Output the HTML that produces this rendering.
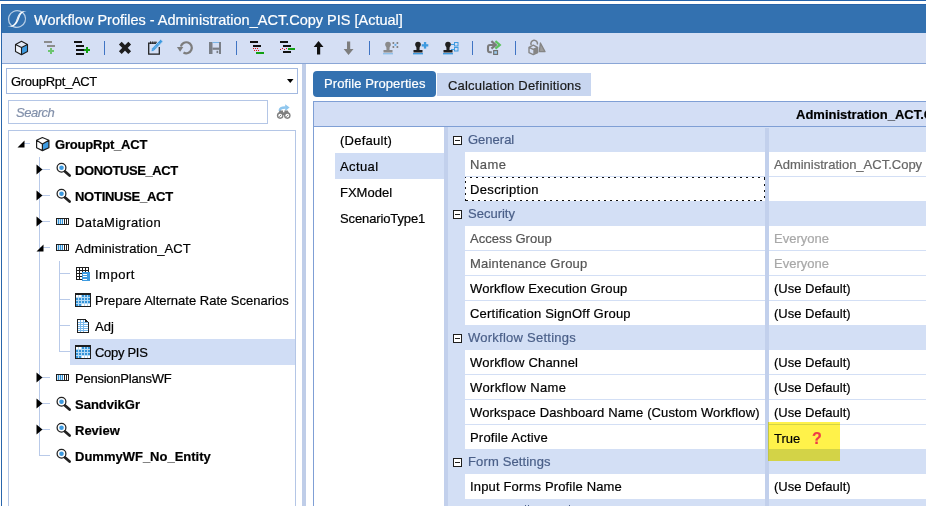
<!DOCTYPE html>
<html><head><meta charset="utf-8">
<style>
*{margin:0;padding:0;box-sizing:border-box}
html,body{width:926px;height:506px;overflow:hidden;background:#fff;font-family:"Liberation Sans",sans-serif;font-size:13px;color:#000}
.a{position:absolute}
.t{position:absolute;line-height:15px;white-space:nowrap;-webkit-text-stroke:0.2px currentColor}
.b{font-weight:bold}
svg{position:absolute;overflow:visible}
</style></head><body>
<!-- top line -->
<div class="a" style="left:0;top:0;width:926px;height:1px;background:#2563aa"></div>
<!-- frame left line -->
<div class="a" style="left:1px;top:4px;width:1px;height:502px;background:#2a66ab"></div>
<!-- title bar -->
<div class="a" style="left:1px;top:4px;width:925px;height:29px;background:#3371b0;border-top:1px solid #2864aa;border-left:1px solid #2864aa"></div>
<div class="t" style="left:34px;top:12px;font-size:14.5px;line-height:17px;color:#fff">Workflow Profiles - Administration_ACT.Copy PIS [Actual]</div>
<!-- toolbar -->
<div class="a" style="left:2px;top:33px;width:924px;height:31px;background:#d5dff4;border-bottom:1px solid #8aa6d6"></div>

<!-- left panel -->
<div class="a" style="left:6px;top:68px;width:292px;height:26px;border:1px solid #a3b9e0"></div>
<div class="t" style="left:11px;top:74px;letter-spacing:-0.3px">GroupRpt_ACT</div>
<div class="a" style="left:8px;top:100px;width:260px;height:24px;border:1px solid #b4c6e6"></div>
<div class="t" style="left:16px;top:105px;font-style:italic;color:#8290aa;letter-spacing:-0.5px">Search</div>
<div class="a" style="left:8px;top:130px;width:288px;height:380px;border:1px solid #b4c6e6"></div>
<!-- splitter -->
<div class="a" style="left:302px;top:64px;width:4px;height:442px;background:#bfcde8"></div>

<!-- tabs -->
<div class="a" style="left:313px;top:71px;width:123px;height:26px;background:#3371b0;border-radius:4px"></div>
<div class="t" style="left:324px;top:76px;color:#fff;letter-spacing:0.1px">Profile Properties</div>
<div class="a" style="left:437px;top:73px;width:154px;height:23px;background:#c8d6f0"></div>
<div class="t" style="left:448px;top:78px;color:#1a1a1a;letter-spacing:0.2px">Calculation Definitions</div>

<!-- content panel -->
<div class="a" style="left:313px;top:101px;width:620px;height:420px;border:1px solid #7f9fd5"></div>
<div class="a" style="left:314px;top:102px;width:612px;height:25px;background:#d3def5;border-bottom:1px solid #7f9fd5"></div>
<div class="t b" style="left:796px;top:107px">Administration_ACT.Copy PIS</div>
<svg style="left:6px;top:8px" width="24" height="22" viewBox="0 0 24 22"><ellipse cx="11" cy="11" rx="8.6" ry="8.3" transform="rotate(-25 11 11)" fill="none" stroke="#e3ecf7" stroke-width="1.3" opacity="0.75"/><path d="M1.5 18.6 C6 18.6 8.5 16.5 10 13 C11.5 9 12.5 5 16 3.6 C17.5 3.1 19 3.1 20.8 3.3 C17 3.6 15 5.5 13.5 9.5 C12 13.5 10.5 17 7 18.4 C5 19 3 18.9 1.5 18.6 Z" fill="#fff"/><path d="M10.6 13.5 C11.6 11 12.2 8.5 13.6 6.3" fill="none" stroke="#9fbfe0" stroke-width="0.5" opacity="0.8"/></svg>
<svg style="left:286px;top:78px" width="8" height="6" viewBox="0 0 8 6"><path d="M1 1 H7.5 L4.25 5 Z" fill="#000"/></svg>
<svg style="left:275px;top:103px" width="17" height="18" viewBox="0 0 17 18"><path d="M4.6 7.8 C4.8 5.2 7 4.4 10.6 4.5" fill="none" stroke="#8ec6ee" stroke-width="2.3"/><path d="M10.2 1.3 L14.6 4.6 L10.2 7.9 Z" fill="#8ec6ee"/><path d="M2.6 12 L4.6 7.6 H8 V9.2 H9.4 V7.6 H12.8 L14.8 12 Z" fill="#7f7f7f"/><circle cx="5.2" cy="12.6" r="3.3" fill="#7f7f7f"/><circle cx="12.3" cy="12.6" r="3.3" fill="#7f7f7f"/><circle cx="5.2" cy="12.6" r="1.9" fill="#fff"/><circle cx="12.3" cy="12.6" r="1.9" fill="#fff"/><path d="M4.4 13.6 L5.8 12.2 M11.5 13.6 L12.9 12.2" stroke="#555" stroke-width="0.9"/></svg>
<div class="a" style="left:70px;top:339px;width:225px;height:26px;background:#d0ddf5"></div>
<div class="a" style="left:39px;top:157px;width:1px;height:299px;background:#b9cae9"></div>
<div class="a" style="left:59px;top:261px;width:1px;height:91px;background:#b9cae9"></div>
<div class="a" style="left:24px;top:143px;width:6px;height:1px;background:#b9cae9"></div>
<svg style="left:17px;top:140px" width="8" height="8" viewBox="0 0 8 8"><path d="M7.5 0.5 L7.5 7.5 L0.5 7.5 Z" fill="#000"/></svg>
<svg style="left:36px;top:137px" width="14" height="15" viewBox="0 0 14 15"><path d="M6.4 6.9 L12.9 3.2 L12.9 10.7 L6.4 14.1 Z" fill="#3d9ae0"/><path d="M6.4 0.5 L12.9 3.2 L12.9 10.7 L6.4 13.6 L0.6 10.7 L0.6 3.2 Z M0.6 3.2 L6.4 6.9 L12.9 3.2 M6.4 6.9 L6.4 13.6" fill="none" stroke="#1e1e1e" stroke-width="1.2" stroke-linejoin="round"/></svg>
<div class="t b" style="left:55px;top:137px;letter-spacing:-0.2px">GroupRpt_ACT</div>
<div class="a" style="left:40px;top:169px;width:10px;height:1px;background:#b9cae9"></div>
<svg style="left:36px;top:164px" width="8" height="11" viewBox="0 0 8 11"><path d="M0.5 0.5 L6.5 5.5 L0.5 10.5 Z" fill="#000"/></svg>
<svg style="left:56px;top:162px" width="16" height="16" viewBox="0 0 16 16"><circle cx="5.5" cy="5.8" r="4.4" fill="#fff" stroke="#222" stroke-width="1.25"/><circle cx="5.5" cy="5.8" r="2.3" fill="#3d9ae0"/><path d="M9 9.4 L13.6 13.6" stroke="#222" stroke-width="2.7" stroke-linecap="round"/></svg>
<div class="t b" style="left:75px;top:163px;letter-spacing:-0.4px">DONOTUSE_ACT</div>
<div class="a" style="left:40px;top:195px;width:10px;height:1px;background:#b9cae9"></div>
<svg style="left:36px;top:190px" width="8" height="11" viewBox="0 0 8 11"><path d="M0.5 0.5 L6.5 5.5 L0.5 10.5 Z" fill="#000"/></svg>
<svg style="left:56px;top:188px" width="16" height="16" viewBox="0 0 16 16"><circle cx="5.5" cy="5.8" r="4.4" fill="#fff" stroke="#222" stroke-width="1.25"/><circle cx="5.5" cy="5.8" r="2.3" fill="#3d9ae0"/><path d="M9 9.4 L13.6 13.6" stroke="#222" stroke-width="2.7" stroke-linecap="round"/></svg>
<div class="t b" style="left:75px;top:189px;letter-spacing:-0.27px">NOTINUSE_ACT</div>
<div class="a" style="left:40px;top:221px;width:10px;height:1px;background:#b9cae9"></div>
<svg style="left:36px;top:216px" width="8" height="11" viewBox="0 0 8 11"><path d="M0.5 0.5 L6.5 5.5 L0.5 10.5 Z" fill="#000"/></svg>
<svg style="left:56px;top:218px" width="14" height="8" viewBox="0 0 14 8" shape-rendering="crispEdges"><rect x="0" y="0" width="13" height="7" fill="#1e1e1e"/><rect x="1" y="1" width="11" height="5" fill="#fff"/><rect x="1" y="1" width="6" height="5" fill="#c9e4f7"/><rect x="2" y="1" width="1" height="5" fill="#3594d8"/><rect x="4" y="1" width="1" height="5" fill="#3594d8"/><rect x="6" y="1" width="1" height="5" fill="#3594d8"/><rect x="8" y="1" width="1" height="5" fill="#222"/><rect x="10" y="1" width="1" height="5" fill="#222"/></svg>
<div class="t" style="left:75px;top:215px;letter-spacing:0.4px">DataMigration</div>
<div class="a" style="left:40px;top:247px;width:10px;height:1px;background:#b9cae9"></div>
<svg style="left:36px;top:244px" width="8" height="8" viewBox="0 0 8 8"><path d="M7.5 0.5 L7.5 7.5 L0.5 7.5 Z" fill="#000"/></svg>
<svg style="left:56px;top:244px" width="14" height="8" viewBox="0 0 14 8" shape-rendering="crispEdges"><rect x="0" y="0" width="13" height="7" fill="#1e1e1e"/><rect x="1" y="1" width="11" height="5" fill="#fff"/><rect x="1" y="1" width="6" height="5" fill="#c9e4f7"/><rect x="2" y="1" width="1" height="5" fill="#3594d8"/><rect x="4" y="1" width="1" height="5" fill="#3594d8"/><rect x="6" y="1" width="1" height="5" fill="#3594d8"/><rect x="8" y="1" width="1" height="5" fill="#222"/><rect x="10" y="1" width="1" height="5" fill="#222"/></svg>
<div class="t" style="left:75px;top:241px">Administration_ACT</div>
<div class="a" style="left:60px;top:273px;width:10px;height:1px;background:#b9cae9"></div>
<svg style="left:76px;top:267px" width="16" height="16" viewBox="0 0 16 16" shape-rendering="crispEdges"><rect x="0" y="0" width="13" height="13" fill="#1e1e1e"/><rect x="1" y="1" width="2" height="2" fill="#fff"/><rect x="1" y="4" width="2" height="2" fill="#fff"/><rect x="1" y="7" width="2" height="2" fill="#fff"/><rect x="1" y="10" width="2" height="2" fill="#fff"/><rect x="4" y="1" width="2" height="2" fill="#fff"/><rect x="4" y="4" width="2" height="2" fill="#fff"/><rect x="4" y="7" width="2" height="2" fill="#fff"/><rect x="4" y="10" width="2" height="2" fill="#fff"/><rect x="7" y="1" width="2" height="2" fill="#fff"/><rect x="7" y="4" width="2" height="2" fill="#fff"/><rect x="7" y="7" width="2" height="2" fill="#fff"/><rect x="7" y="10" width="2" height="2" fill="#fff"/><rect x="10" y="1" width="2" height="2" fill="#fff"/><rect x="10" y="4" width="2" height="2" fill="#fff"/><rect x="10" y="7" width="2" height="2" fill="#fff"/><rect x="10" y="10" width="2" height="2" fill="#fff"/><rect x="6" y="5" width="8" height="9" fill="#3d9ae0"/><rect x="7" y="6.5" width="4" height="1" fill="#fff"/><rect x="7" y="9.0" width="4" height="1" fill="#fff"/><rect x="7" y="11.5" width="4" height="1" fill="#fff"/></svg>
<div class="t" style="left:95px;top:267px;letter-spacing:0.5px">Import</div>
<div class="a" style="left:60px;top:299px;width:10px;height:1px;background:#b9cae9"></div>
<svg style="left:75px;top:293px" width="16" height="15" viewBox="0 0 16 15" shape-rendering="crispEdges"><rect x="0" y="0" width="16" height="14" rx="1" fill="#1e1e1e"/><rect x="1" y="2" width="14" height="11" fill="#b6dbf5"/><rect x="1" y="2" width="2" height="2" fill="#fff"/><rect x="1" y="5" width="2" height="2" fill="#3594d8"/><rect x="1" y="8" width="2" height="2" fill="#3594d8"/><rect x="1" y="11" width="2" height="2" fill="#3594d8"/><rect x="4" y="2" width="2" height="2" fill="#fff"/><rect x="4" y="5" width="2" height="2" fill="#3594d8"/><rect x="4" y="8" width="2" height="2" fill="#3594d8"/><rect x="4" y="11" width="2" height="2" fill="#3594d8"/><rect x="7" y="2" width="2" height="2" fill="#3594d8"/><rect x="7" y="5" width="2" height="2" fill="#3594d8"/><rect x="7" y="8" width="2" height="2" fill="#3594d8"/><rect x="7" y="11" width="2" height="2" fill="#fff"/><rect x="10" y="2" width="2" height="2" fill="#3594d8"/><rect x="10" y="5" width="2" height="2" fill="#3594d8"/><rect x="10" y="8" width="2" height="2" fill="#3594d8"/><rect x="10" y="11" width="2" height="2" fill="#fff"/><rect x="13" y="2" width="2" height="2" fill="#3594d8"/><rect x="13" y="5" width="2" height="2" fill="#3594d8"/><rect x="13" y="8" width="2" height="2" fill="#3594d8"/><rect x="13" y="11" width="2" height="2" fill="#fff"/></svg>
<div class="t" style="left:95px;top:293px">Prepare Alternate Rate Scenarios</div>
<div class="a" style="left:60px;top:325px;width:10px;height:1px;background:#b9cae9"></div>
<svg style="left:77px;top:319px" width="13" height="15" viewBox="0 0 13 15" shape-rendering="crispEdges"><path d="M0 0 H9 L12 3 V14 H0 Z" fill="#fff"/><g fill="#78b8ec"><rect x="1" y="3" width="10" height="1"/><rect x="1" y="5" width="10" height="1"/><rect x="1" y="7" width="10" height="1"/><rect x="1" y="9" width="10" height="1"/><rect x="1" y="11" width="10" height="1"/><rect x="3" y="1" width="1" height="12"/><rect x="6" y="1" width="1" height="12"/></g><path d="M0 0 H9 V1 H0 Z M0 0 H1 V14 H0 Z M0 13 H12 V14 H0 Z M11 3 H12 V14 H11 Z M9 1 H10 V2 H9 Z M10 2 H11 V3 H10 Z M8 1 H9 V3 H8 Z M8 2 H11 V3 H8 Z" fill="#1e1e1e"/></svg>
<div class="t" style="left:95px;top:319px">Adj</div>
<div class="a" style="left:60px;top:351px;width:10px;height:1px;background:#b9cae9"></div>
<svg style="left:75px;top:345px" width="16" height="15" viewBox="0 0 16 15" shape-rendering="crispEdges"><rect x="0" y="0" width="16" height="14" rx="1" fill="#1e1e1e"/><rect x="1" y="2" width="14" height="11" fill="#b6dbf5"/><rect x="1" y="2" width="2" height="2" fill="#fff"/><rect x="1" y="5" width="2" height="2" fill="#3594d8"/><rect x="1" y="8" width="2" height="2" fill="#3594d8"/><rect x="1" y="11" width="2" height="2" fill="#3594d8"/><rect x="4" y="2" width="2" height="2" fill="#fff"/><rect x="4" y="5" width="2" height="2" fill="#3594d8"/><rect x="4" y="8" width="2" height="2" fill="#3594d8"/><rect x="4" y="11" width="2" height="2" fill="#3594d8"/><rect x="7" y="2" width="2" height="2" fill="#3594d8"/><rect x="7" y="5" width="2" height="2" fill="#3594d8"/><rect x="7" y="8" width="2" height="2" fill="#3594d8"/><rect x="7" y="11" width="2" height="2" fill="#fff"/><rect x="10" y="2" width="2" height="2" fill="#3594d8"/><rect x="10" y="5" width="2" height="2" fill="#3594d8"/><rect x="10" y="8" width="2" height="2" fill="#3594d8"/><rect x="10" y="11" width="2" height="2" fill="#fff"/><rect x="13" y="2" width="2" height="2" fill="#3594d8"/><rect x="13" y="5" width="2" height="2" fill="#3594d8"/><rect x="13" y="8" width="2" height="2" fill="#3594d8"/><rect x="13" y="11" width="2" height="2" fill="#fff"/></svg>
<div class="t" style="left:95px;top:345px;letter-spacing:-0.3px">Copy PIS</div>
<div class="a" style="left:40px;top:377px;width:10px;height:1px;background:#b9cae9"></div>
<svg style="left:36px;top:372px" width="8" height="11" viewBox="0 0 8 11"><path d="M0.5 0.5 L6.5 5.5 L0.5 10.5 Z" fill="#000"/></svg>
<svg style="left:56px;top:374px" width="14" height="8" viewBox="0 0 14 8" shape-rendering="crispEdges"><rect x="0" y="0" width="13" height="7" fill="#1e1e1e"/><rect x="1" y="1" width="11" height="5" fill="#fff"/><rect x="1" y="1" width="6" height="5" fill="#c9e4f7"/><rect x="2" y="1" width="1" height="5" fill="#3594d8"/><rect x="4" y="1" width="1" height="5" fill="#3594d8"/><rect x="6" y="1" width="1" height="5" fill="#3594d8"/><rect x="8" y="1" width="1" height="5" fill="#222"/><rect x="10" y="1" width="1" height="5" fill="#222"/></svg>
<div class="t" style="left:75px;top:371px;letter-spacing:-0.23px">PensionPlansWF</div>
<div class="a" style="left:40px;top:403px;width:10px;height:1px;background:#b9cae9"></div>
<svg style="left:36px;top:398px" width="8" height="11" viewBox="0 0 8 11"><path d="M0.5 0.5 L6.5 5.5 L0.5 10.5 Z" fill="#000"/></svg>
<svg style="left:56px;top:396px" width="16" height="16" viewBox="0 0 16 16"><circle cx="5.5" cy="5.8" r="4.4" fill="#fff" stroke="#222" stroke-width="1.25"/><circle cx="5.5" cy="5.8" r="2.3" fill="#3d9ae0"/><path d="M9 9.4 L13.6 13.6" stroke="#222" stroke-width="2.7" stroke-linecap="round"/></svg>
<div class="t b" style="left:75px;top:397px">SandvikGr</div>
<div class="a" style="left:40px;top:429px;width:10px;height:1px;background:#b9cae9"></div>
<svg style="left:36px;top:424px" width="8" height="11" viewBox="0 0 8 11"><path d="M0.5 0.5 L6.5 5.5 L0.5 10.5 Z" fill="#000"/></svg>
<svg style="left:56px;top:422px" width="16" height="16" viewBox="0 0 16 16"><circle cx="5.5" cy="5.8" r="4.4" fill="#fff" stroke="#222" stroke-width="1.25"/><circle cx="5.5" cy="5.8" r="2.3" fill="#3d9ae0"/><path d="M9 9.4 L13.6 13.6" stroke="#222" stroke-width="2.7" stroke-linecap="round"/></svg>
<div class="t b" style="left:75px;top:423px">Review</div>
<div class="a" style="left:39px;top:455px;width:11px;height:1px;background:#b9cae9"></div>
<svg style="left:56px;top:448px" width="16" height="16" viewBox="0 0 16 16"><circle cx="5.5" cy="5.8" r="4.4" fill="#fff" stroke="#222" stroke-width="1.25"/><circle cx="5.5" cy="5.8" r="2.3" fill="#3d9ae0"/><path d="M9 9.4 L13.6 13.6" stroke="#222" stroke-width="2.7" stroke-linecap="round"/></svg>
<div class="t b" style="left:75px;top:449px">DummyWF_No_Entity</div>
<div class="a" style="left:335px;top:153px;width:109px;height:26px;background:#d0ddf5"></div>
<div class="t" style="left:340px;top:133px;letter-spacing:0.25px">(Default)</div>
<div class="t" style="left:340px;top:159px;letter-spacing:0.4px">Actual</div>
<div class="t" style="left:340px;top:185px">FXModel</div>
<div class="t" style="left:340px;top:211px;letter-spacing:-0.12px">ScenarioType1</div>
<div class="a" style="left:444px;top:127px;width:482px;height:379px;background:#d3dff5"></div>
<div class="a" style="left:444px;top:127px;width:4px;height:379px;background:#c2d0ec"></div>
<svg style="left:453px;top:136px" width="10" height="10" viewBox="0 0 10 10" shape-rendering="crispEdges"><rect x="0.5" y="0.5" width="8" height="8" fill="#fff" stroke="#1e1e1e" stroke-width="1"/><rect x="2" y="4" width="5" height="1" fill="#1e1e1e"/></svg>
<div class="t" style="left:468px;top:132px;color:#4a5f88">General</div>
<div class="a" style="left:465px;top:152px;width:300px;height:24px;background:#fff"></div>
<div class="a" style="left:769px;top:152px;width:157px;height:24px;background:#fff"></div>
<div class="t" style="left:470px;top:157px;color:#555;letter-spacing:0.4px">Name</div>
<div class="t" style="left:774px;top:157px;color:#666">Administration_ACT.Copy</div>
<div class="a" style="left:465px;top:177px;width:300px;height:24px;background:#fff"></div>
<div class="a" style="left:769px;top:177px;width:157px;height:24px;background:#fff"></div>
<div class="t" style="left:470px;top:182px;color:#000;letter-spacing:0.34px">Description</div>
<svg style="left:453px;top:210px" width="10" height="10" viewBox="0 0 10 10" shape-rendering="crispEdges"><rect x="0.5" y="0.5" width="8" height="8" fill="#fff" stroke="#1e1e1e" stroke-width="1"/><rect x="2" y="4" width="5" height="1" fill="#1e1e1e"/></svg>
<div class="t" style="left:468px;top:206px;color:#4a5f88">Security</div>
<div class="a" style="left:465px;top:226px;width:300px;height:24px;background:#fff"></div>
<div class="a" style="left:769px;top:226px;width:157px;height:24px;background:#fff"></div>
<div class="t" style="left:470px;top:231px;color:#555">Access Group</div>
<div class="t" style="left:774px;top:231px;color:#a8a8a8">Everyone</div>
<div class="a" style="left:465px;top:251px;width:300px;height:24px;background:#fff"></div>
<div class="a" style="left:769px;top:251px;width:157px;height:24px;background:#fff"></div>
<div class="t" style="left:470px;top:256px;color:#555;letter-spacing:0.19px">Maintenance Group</div>
<div class="t" style="left:774px;top:256px;color:#a8a8a8">Everyone</div>
<div class="a" style="left:465px;top:276px;width:300px;height:24px;background:#fff"></div>
<div class="a" style="left:769px;top:276px;width:157px;height:24px;background:#fff"></div>
<div class="t" style="left:470px;top:281px;color:#000;letter-spacing:0.16px">Workflow Execution Group</div>
<div class="t" style="left:774px;top:281px;color:#000">(Use Default)</div>
<div class="a" style="left:465px;top:301px;width:300px;height:24px;background:#fff"></div>
<div class="a" style="left:769px;top:301px;width:157px;height:24px;background:#fff"></div>
<div class="t" style="left:470px;top:306px;color:#000;letter-spacing:0.21px">Certification SignOff Group</div>
<div class="t" style="left:774px;top:306px;color:#000">(Use Default)</div>
<svg style="left:453px;top:334px" width="10" height="10" viewBox="0 0 10 10" shape-rendering="crispEdges"><rect x="0.5" y="0.5" width="8" height="8" fill="#fff" stroke="#1e1e1e" stroke-width="1"/><rect x="2" y="4" width="5" height="1" fill="#1e1e1e"/></svg>
<div class="t" style="left:468px;top:330px;color:#4a5f88;letter-spacing:0.25px">Workflow Settings</div>
<div class="a" style="left:465px;top:350px;width:300px;height:24px;background:#fff"></div>
<div class="a" style="left:769px;top:350px;width:157px;height:24px;background:#fff"></div>
<div class="t" style="left:470px;top:355px;color:#000;letter-spacing:0.18px">Workflow Channel</div>
<div class="t" style="left:774px;top:355px;color:#000">(Use Default)</div>
<div class="a" style="left:465px;top:375px;width:300px;height:24px;background:#fff"></div>
<div class="a" style="left:769px;top:375px;width:157px;height:24px;background:#fff"></div>
<div class="t" style="left:470px;top:380px;color:#000;letter-spacing:0.38px">Workflow Name</div>
<div class="t" style="left:774px;top:380px;color:#000">(Use Default)</div>
<div class="a" style="left:465px;top:400px;width:300px;height:24px;background:#fff"></div>
<div class="a" style="left:769px;top:400px;width:157px;height:24px;background:#fff"></div>
<div class="t" style="left:470px;top:405px;color:#000;letter-spacing:0.13px">Workspace Dashboard Name (Custom Workflow)</div>
<div class="t" style="left:774px;top:405px;color:#000">(Use Default)</div>
<div class="a" style="left:465px;top:425px;width:300px;height:24px;background:#fff"></div>
<div class="a" style="left:769px;top:425px;width:157px;height:24px;background:#fff"></div>
<div class="t" style="left:470px;top:430px;color:#000;letter-spacing:0.2px">Profile Active</div>
<div class="t" style="left:774px;top:431px;color:#000">True</div>
<svg style="left:453px;top:458px" width="10" height="10" viewBox="0 0 10 10" shape-rendering="crispEdges"><rect x="0.5" y="0.5" width="8" height="8" fill="#fff" stroke="#1e1e1e" stroke-width="1"/><rect x="2" y="4" width="5" height="1" fill="#1e1e1e"/></svg>
<div class="t" style="left:468px;top:454px;color:#4a5f88;letter-spacing:0.14px">Form Settings</div>
<div class="a" style="left:465px;top:474px;width:300px;height:25px;background:#fff"></div>
<div class="a" style="left:769px;top:474px;width:157px;height:25px;background:#fff"></div>
<div class="t" style="left:470px;top:479px;color:#000;letter-spacing:0.16px">Input Forms Profile Name</div>
<div class="t" style="left:774px;top:479px;color:#000">(Use Default)</div>
<div class="a" style="left:525px;top:505px;width:1px;height:1px;background:#4a5f88"></div>
<div class="a" style="left:528px;top:505px;width:1px;height:1px;background:#4a5f88"></div>
<div class="a" style="left:569px;top:505px;width:1px;height:1px;background:#4a5f88"></div>
<div class="a" style="left:765px;top:128px;width:4px;height:378px;background:#c2d0ec"></div>
<svg style="left:465px;top:177px" width="300" height="24" viewBox="0 0 300 24" shape-rendering="crispEdges"><line x1="0" y1="0.5" x2="300" y2="0.5" stroke="#111" stroke-width="1" stroke-dasharray="2 4" stroke-dashoffset="1"/><line x1="0" y1="23.5" x2="300" y2="23.5" stroke="#111" stroke-width="1" stroke-dasharray="2 4" stroke-dashoffset="5"/><line x1="0.5" y1="0" x2="0.5" y2="24" stroke="#111" stroke-width="1" stroke-dasharray="2 4" stroke-dashoffset="2"/><line x1="299.5" y1="0" x2="299.5" y2="24" stroke="#111" stroke-width="1" stroke-dasharray="2 4" stroke-dashoffset="5"/></svg>
<div class="a" style="left:768px;top:422px;width:72px;height:39px;background:#fff24a;mix-blend-mode:multiply"></div>
<div class="t b" style="left:812px;top:430px;color:#f03a48;font-size:16px;line-height:17px">?</div>
<div class="a" style="left:104px;top:41px;width:1px;height:14px;background:#3f74c4"></div>
<div class="a" style="left:236px;top:41px;width:1px;height:14px;background:#3f74c4"></div>
<div class="a" style="left:369px;top:41px;width:1px;height:14px;background:#3f74c4"></div>
<div class="a" style="left:472px;top:41px;width:1px;height:14px;background:#3f74c4"></div>
<div class="a" style="left:515px;top:41px;width:1px;height:14px;background:#3f74c4"></div>
<svg style="left:14px;top:40px" width="16" height="16" viewBox="0 0 16 16"><path d="M7.5 7.6 L13.5 4.4 L13.5 11.6 L7.5 14.8 Z" fill="#3d9ae0"/><path d="M1.5 4.4 L7.5 7.6 L7.5 14.8 L1.5 11.6 Z" fill="#eef2fa"/><path d="M7.5 1.2 L13.5 4.4 L7.5 7.6 L1.5 4.4 Z" fill="#e2e9f6"/><path d="M7.5 1.2 L13.5 4.4 L13.5 11.6 L7.5 14.8 L1.5 11.6 L1.5 4.4 Z M1.5 4.4 L7.5 7.6 L13.5 4.4 M7.5 7.6 L7.5 14.8" fill="none" stroke="#1e1e1e" stroke-width="1.1" stroke-linejoin="round"/></svg>
<svg style="left:40px;top:38px" width="20" height="20" viewBox="0 0 20 20" shape-rendering="crispEdges"><rect x="4" y="3" width="8" height="2" fill="#8c8c8c"/><rect x="7" y="7" width="8" height="2" fill="#8c8c8c"/><rect x="10" y="10" width="2" height="6" fill="#6cc56f"/><rect x="8" y="12" width="6" height="2" fill="#6cc56f"/></svg>
<svg style="left:70px;top:38px" width="22" height="20" viewBox="0 0 22 20" shape-rendering="crispEdges"><rect x="4" y="3" width="8" height="2" fill="#111"/><rect x="6" y="7" width="8" height="2" fill="#111"/><rect x="6" y="11" width="8" height="2" fill="#111"/><rect x="6" y="15" width="8" height="2" fill="#111"/><rect x="16" y="9" width="2" height="6" fill="#12a012"/><rect x="14" y="11" width="6" height="2" fill="#12a012"/></svg>
<svg style="left:117px;top:40px" width="16" height="16" viewBox="0 0 16 16"><path d="M3.3 3.1 L12.7 12.6 M12.7 3.1 L3.3 12.6" stroke="#1e1e1e" stroke-width="3.9" stroke-linecap="butt"/></svg>
<svg style="left:144px;top:38px" width="20" height="20" viewBox="0 0 20 20"><path d="M15.3 9 V16 H4.7 V5 H13" fill="none" stroke="#1e1e1e" stroke-width="1.25"/><path d="M6.5 3.4 V6 M8.3 3.4 V6 M10.1 3.4 V6 M11.9 3.4 V6" stroke="#1e1e1e" stroke-width="0.9"/><path d="M7 13.8 L7.5 10.8 L16.6 1.2 L19 3.4 L9.9 13 Z" fill="#3d9ae0" stroke="#d5dff4" stroke-width="0.8" stroke-linejoin="round"/><path d="M9 11.6 L15.8 4.4" stroke="#cfe6f8" stroke-width="0.7" stroke-dasharray="1 1"/></svg>
<svg style="left:174px;top:38px" width="20" height="20" viewBox="0 0 20 20"><path d="M6.9 8.6 A5.5 5.5 0 1 1 9.5 14.5" fill="none" stroke="#7d7d7d" stroke-width="2.2"/><path d="M2.9 9.1 L9.3 9.1 L6.1 13.7 Z" fill="#7d7d7d"/></svg>
<svg style="left:204px;top:38px" width="20" height="20" viewBox="0 0 20 20"><rect x="5" y="4" width="3.5" height="12" fill="#7a7f87"/><rect x="15" y="4" width="2" height="12" fill="#7a7f87"/><rect x="8.5" y="4" width="6.5" height="0.9" fill="#6eb0e6"/><rect x="8.5" y="9.6" width="6.5" height="2.2" fill="#7a7f87"/><rect x="12.5" y="12.8" width="1.7" height="2.3" fill="#7a7f87"/></svg>
<svg style="left:248px;top:40px" width="18" height="16" viewBox="0 0 18 16" shape-rendering="crispEdges"><rect x="2" y="1" width="8" height="2" fill="#111"/><rect x="5" y="5" width="8" height="2" fill="#111"/><g fill="#e01010"><rect x="5" y="8" width="1" height="1"/><rect x="7" y="8" width="1" height="1"/><rect x="9" y="8" width="1" height="1"/><rect x="6" y="10" width="1" height="1"/><rect x="8" y="10" width="1" height="1"/><rect x="10" y="10" width="1" height="1"/></g><rect x="8" y="12" width="8" height="2" fill="#12a012"/></svg>
<svg style="left:278px;top:40px" width="20" height="16" viewBox="0 0 20 16" shape-rendering="crispEdges"><rect x="2" y="1" width="8" height="2" fill="#111"/><rect x="5" y="5" width="8" height="2" fill="#111"/><g fill="#e01010"><rect x="2" y="9" width="1" height="1"/><rect x="4" y="8" width="1" height="1"/><rect x="6" y="9" width="1" height="1"/><rect x="8" y="8" width="1" height="1"/></g><rect x="10" y="8" width="7" height="2" fill="#12a012"/><rect x="5" y="11" width="8" height="2" fill="#111"/></svg>
<svg style="left:313px;top:40px" width="12" height="16" viewBox="0 0 12 16"><path d="M5.5 1 L10.5 7 H7.2 V14.5 H4 V7 H0.7 Z" fill="#111"/></svg>
<svg style="left:343px;top:40px" width="12" height="16" viewBox="0 0 12 16"><path d="M5.5 15 L10.5 9 H7.2 V1.5 H4 V9 H0.7 Z" fill="#7d7d7d"/></svg>
<svg style="left:0;top:0" width="926" height="70" viewBox="0 0 926 70"><circle cx="388" cy="44.6" r="2.8" fill="#8a8a8a"/><path d="M386.3 46 L389.7 46 L389.5 50 H392.5 V52.5 H383.5 V50 H386.5 Z" fill="#8a8a8a"/><rect x="383" y="53" width="10" height="1.4" fill="#8fc0ea"/><g fill="#7a7a7a"><circle cx="393.4" cy="42.9" r="1"/><circle cx="397.4" cy="42.9" r="1"/><circle cx="393.4" cy="46.9" r="1"/><circle cx="397.4" cy="46.9" r="1"/></g><circle cx="395.4" cy="44.9" r="1.1" fill="#6aaee6"/><circle cx="418" cy="44.6" r="2.8" fill="#1e1e1e"/><path d="M416.3 46 L419.7 46 L419.5 50 H422.5 V52.5 H413.5 V50 H416.5 Z" fill="#1e1e1e"/><rect x="413" y="53" width="10" height="1.4" fill="#3d9ae0"/><rect x="423.9" y="42" width="2.3" height="6.6" fill="#3d9ae0"/><rect x="421.7" y="44.2" width="6.6" height="2.3" fill="#3d9ae0"/><circle cx="448" cy="44.6" r="2.8" fill="#1e1e1e"/><path d="M446.3 46 L449.7 46 L449.5 50 H452.5 V52.5 H443.5 V50 H446.5 Z" fill="#1e1e1e"/><rect x="443" y="53" width="10" height="1.4" fill="#3d9ae0"/><rect x="454.5" y="42.5" width="3.5" height="3.5" fill="none" stroke="#3d9ae0" stroke-width="1"/><rect x="454.5" y="47.5" width="3.5" height="3.5" fill="none" stroke="#3d9ae0" stroke-width="1"/><path d="M451 44.5 H454 M451 49.5 H454" stroke="#3d9ae0" stroke-width="1"/></svg>
<svg style="left:484px;top:38px" width="20" height="20" viewBox="0 0 20 20"><path d="M11.5 7 H6 Q4 7 4 9 V12.2 Q4 14.2 6 14.2 H7.8" fill="none" stroke="#7a7a7a" stroke-width="2.1"/><path d="M7.4 3.2 L11.8 6.9 L7.4 10.6" fill="none" stroke="#7a7a7a" stroke-width="2.2"/><path d="M11.4 3.2 L15.8 6.9 L11.4 10.6" fill="none" stroke="#5cc05f" stroke-width="2.2"/><rect x="9.7" y="12.6" width="3.8" height="3.8" fill="#9dcdf2" stroke="#707070" stroke-width="1.2"/></svg>
<svg style="left:524px;top:38px" width="24" height="20" viewBox="0 0 24 20"><path d="M7.3 7.2 A3.3 3.3 0 1 1 13.3 6.6" fill="none" stroke="#858585" stroke-width="1.5"/><path d="M16.4 5 L21 13.6 H15.3 Z" fill="#9c9c9c" stroke="#858585" stroke-width="1.3" stroke-linejoin="round"/><path d="M9.3 11.4 L13.6 9.3 L13.6 14.6 L9.3 16.6 Z" fill="#858585"/><path d="M9.3 7.2 L13.6 9.3 L13.6 14.6 L9.3 16.6 L5 14.6 L5 9.3 Z M5 9.3 L9.3 11.4 L13.6 9.3" fill="none" stroke="#858585" stroke-width="1.4" stroke-linejoin="round"/></svg>
</body></html>
